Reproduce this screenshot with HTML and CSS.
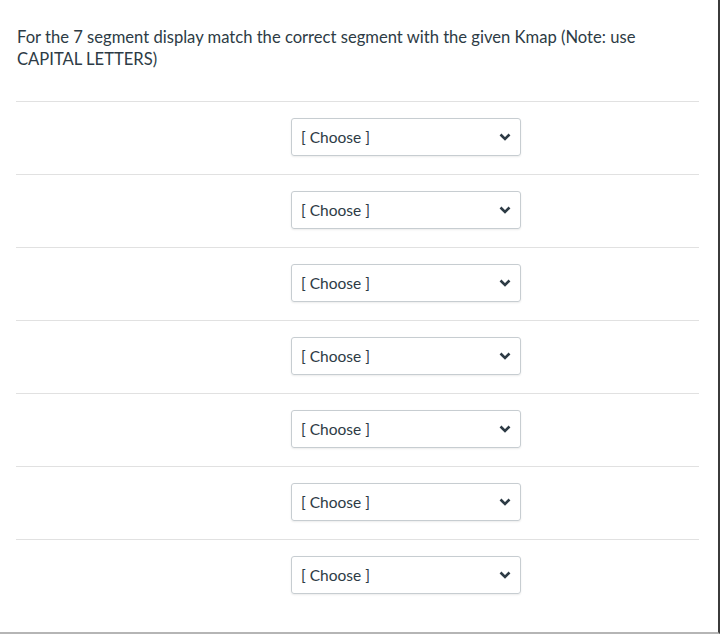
FILE: index.html
```html
<!DOCTYPE html>
<html lang="en">

<head>
    <meta charset="UTF-8">
    <meta name="viewport" content="width=device-width, initial-scale=1.0">
    <title>Matching question</title>
    <link rel="stylesheet" href="styles.css">
</head>

<body>
    <div class="question">
        <div class="text">
            For the 7 segment display match the correct segment with the given Kmap (Note: use CAPITAL LETTERS)
        </div>
        <div class="answers">
            <div class="row">
                <div class="label"></div>
                <div class="pick"><span>[ Choose ]</span><svg width="12" height="8" viewBox="0 0 12 8"><path d="M1.5 1.5 L6 6 L10.5 1.5" fill="none" stroke="#2d3b45" stroke-width="2.6"/></svg></div>
            </div>
            <div class="row">
                <div class="label"></div>
                <div class="pick"><span>[ Choose ]</span><svg width="12" height="8" viewBox="0 0 12 8"><path d="M1.5 1.5 L6 6 L10.5 1.5" fill="none" stroke="#2d3b45" stroke-width="2.6"/></svg></div>
            </div>
            <div class="row">
                <div class="label"></div>
                <div class="pick"><span>[ Choose ]</span><svg width="12" height="8" viewBox="0 0 12 8"><path d="M1.5 1.5 L6 6 L10.5 1.5" fill="none" stroke="#2d3b45" stroke-width="2.6"/></svg></div>
            </div>
            <div class="row">
                <div class="label"></div>
                <div class="pick"><span>[ Choose ]</span><svg width="12" height="8" viewBox="0 0 12 8"><path d="M1.5 1.5 L6 6 L10.5 1.5" fill="none" stroke="#2d3b45" stroke-width="2.6"/></svg></div>
            </div>
            <div class="row">
                <div class="label"></div>
                <div class="pick"><span>[ Choose ]</span><svg width="12" height="8" viewBox="0 0 12 8"><path d="M1.5 1.5 L6 6 L10.5 1.5" fill="none" stroke="#2d3b45" stroke-width="2.6"/></svg></div>
            </div>
            <div class="row">
                <div class="label"></div>
                <div class="pick"><span>[ Choose ]</span><svg width="12" height="8" viewBox="0 0 12 8"><path d="M1.5 1.5 L6 6 L10.5 1.5" fill="none" stroke="#2d3b45" stroke-width="2.6"/></svg></div>
            </div>
            <div class="row">
                <div class="label"></div>
                <div class="pick"><span>[ Choose ]</span><svg width="12" height="8" viewBox="0 0 12 8"><path d="M1.5 1.5 L6 6 L10.5 1.5" fill="none" stroke="#2d3b45" stroke-width="2.6"/></svg></div>
            </div>
        </div>
    </div>
</body>

</html>
```

FILE: styles.css
```css
body {
    margin: 0;
    background-color: #fff;
    font-family: Lato, "Liberation Sans", sans-serif;
    color: #2d3b45;
}

.question {
    width: 720px;
    height: 634px;
    border-right: 2px solid #3b3b3b;
    border-bottom: 2px solid #b5b5b5;
    padding: 26px 19px 0 16px;
    box-sizing: border-box;
}

.text {
    font-size: 16.6px;
    line-height: 22px;
    padding-left: 1px;
    max-width: 640px;
    height: 75px;
}

.row {
    display: flex;
    align-items: center;
    border-top: 1px solid #e1e1e1;
    height: 70px;
    padding-bottom: 2px;
}

.label {
    width: 275px;
}

.pick {
    width: 230px;
    height: 38px;
    box-sizing: border-box;
    border: 1px solid #c7cdd1;
    border-radius: 3px;
    box-shadow: 0 1px 2px rgba(0, 0, 0, 0.08);
    display: flex;
    align-items: center;
    justify-content: space-between;
    padding: 0 9px 0 9px;
    font-size: 15.5px;
}
```
